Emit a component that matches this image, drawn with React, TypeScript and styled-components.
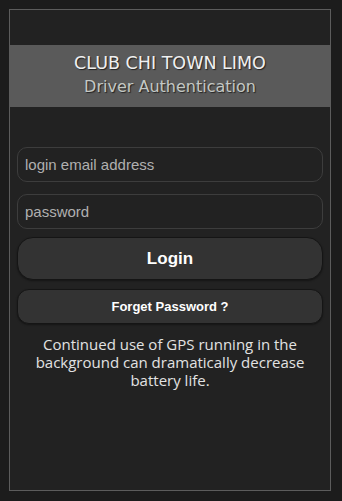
import React, { useState } from 'react'
import styled, { createGlobalStyle } from 'styled-components';

const GlobalStyle = createGlobalStyle`
body {
    margin: 0;
    background: #1c1c1c;
    font-family: "Liberation Sans", Arial, sans-serif;
}
`

function App() {

    const [email, setEmail] = useState('');
    const [password, setPassword] = useState('');

    return (
        <>
        <GlobalStyle />
        <Page>
            <Panel>
                <Header>
                    <Title>CLUB CHI TOWN LIMO</Title>
                    <SubTitle>Driver Authentication</SubTitle>
                </Header>
                <Form onSubmit={(event: any) => { event.preventDefault() }} >
                    <Input value={email} type='text' placeholder='login email address' onChange={(e) => { setEmail(e.currentTarget.value) }} />
                    <Input value={password} type='password' placeholder='password' onChange={(e) => { setPassword(e.currentTarget.value) }} />
                    <Button type='submit' $big>Login</Button>
                    <Button type='button'>Forget Password ?</Button>
                    <Notice>Continued use of GPS running in the background can dramatically decrease battery life.</Notice>
                </Form>
            </Panel>
        </Page>
        </>
    )
}

export default App;

const Page = styled.div`
padding: 9px;
height: 501px;
box-sizing: border-box;
`

const Panel = styled.div`
width: 322px;
height: 482px;
box-sizing: border-box;
border: 1px solid #5c5c5c;
background: #222222;
padding-top: 35px;
`

const Header = styled.div`
height: 62px;
background: #5a5a5a;
display: flex;
flex-direction: column;
align-items: center;
justify-content: center;
font-family: "DejaVu Sans", Verdana, sans-serif;
padding-bottom: 2px;
box-sizing: border-box;
`

const Title = styled.div`
color: #f0f0f0;
font-size: 17.5px;
line-height: 24px;
text-shadow: 1px 1px 1px #222;
`

const SubTitle = styled.div`
color: #c4c8c4;
font-size: 16px;
line-height: 24px;
text-shadow: 1px 1px 1px #222;
`

const Form = styled.form`
display: flex;
flex-direction: column;
padding: 40px 7px 0 7px;
`

const Input = styled.input`
width: 100%;
height: 35px;
box-sizing: border-box;
margin: 0 0 12px 0;
padding: 0 7px;
border: 1px solid #3d3d3d;
border-radius: 10px;
background: #222222;
color: #ddd;
font-family: "Liberation Sans", Arial, sans-serif;
font-size: 15px;
outline: none;

&::placeholder {
    color: #b0b0b0;
}

&:nth-of-type(2) {
    margin-bottom: 8px;
}
`

const Button = styled.button<{ $big?: boolean }>`
width: 100%;
height: ${p => p.$big ? '43px' : '35px'};
margin: 0 0 ${p => p.$big ? '9px' : '11px'} 0;
border: 1px solid #151515;
border-radius: ${p => p.$big ? '16px' : '12px'};
background: #333333;
color: #ffffff;
font-family: "Liberation Sans", Arial, sans-serif;
font-weight: bold;
font-size: ${p => p.$big ? '17px' : '13px'};
box-shadow: 0 1px 2px rgba(0, 0, 0, 0.4);
cursor: pointer;
`

const Notice = styled.div`
color: #e2e2e2;
text-align: center;
font-family: "Open Sans", "Noto Sans", sans-serif;
font-size: 15px;
line-height: 18px;
padding: 0 4px;
`
